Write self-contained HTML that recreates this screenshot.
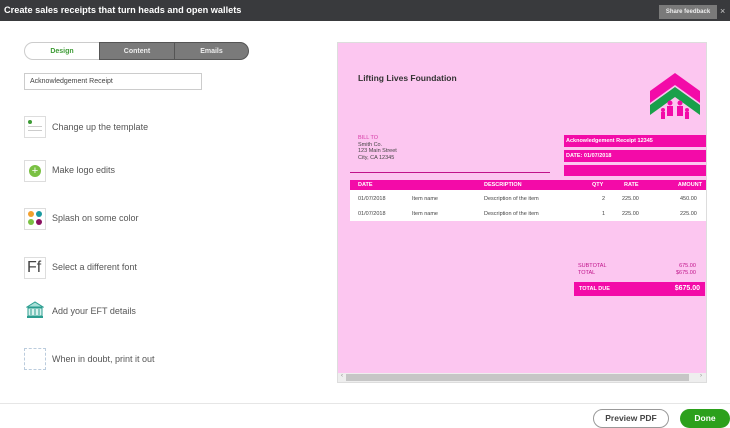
<!DOCTYPE html>
<html><head><style>
*{margin:0;padding:0;box-sizing:border-box}
body{width:730px;height:428px;background:#fff;font-family:"Liberation Sans",sans-serif;position:relative;overflow:hidden}
.a{position:absolute}
.hdr{left:0;top:0;width:730px;height:21px;background:#393a3d;color:#fff;font-size:9.2px;font-weight:bold;padding:5px 0 0 4px}
.sf{left:659px;top:5px;width:58px;height:14px;background:#7a7a7a;color:#eee;font-size:6px;font-weight:bold;text-align:center;line-height:14px}
.tab{top:42px;height:18px;font-size:7px;font-weight:bold;text-align:center;line-height:18px}
.it{left:52px;font-size:9px;color:#555}
.ic{left:24px;width:22px;height:22px;border:1px solid #ddd;background:#fff}
.pk{background:#f30ba8;color:#fff;font-size:5.5px;font-weight:bold}
.t{font-size:5.5px;color:#444}
</style></head><body>
<div class="a hdr">Create sales receipts that turn heads and open wallets</div>
<div class="a sf">Share feedback</div>
<div class="a" style="left:720px;top:6px;color:#ccc;font-size:9px">×</div>

<div class="a tab" style="left:24px;width:76px;border:1px solid #ccc;border-radius:9px 0 0 9px;color:#3d9b35;background:#fff">Design</div>
<div class="a tab" style="left:99px;width:76px;background:#7a7a7a;color:#eee;border:1px solid #555">Content</div>
<div class="a tab" style="left:174px;width:75px;background:#7a7a7a;color:#eee;border:1px solid #555;border-radius:0 9px 9px 0">Emails</div>
<div class="a" style="left:24px;top:73px;width:178px;height:17px;border:1px solid #ccc;font-size:7px;color:#444;padding:4px 5px">Acknowledgement Receipt</div>

<div class="a ic" style="top:116px"><div class="a" style="left:3px;top:3px;width:4px;height:4px;border-radius:50%;background:#3d9b35"></div><div class="a" style="left:3px;top:9px;width:14px;border-top:1px solid #ccc"></div><div class="a" style="left:3px;top:13px;width:14px;border-top:1px solid #ccc"></div></div>
<div class="a it" style="top:122px">Change up the template</div>
<div class="a ic" style="top:160px"><div class="a" style="left:4px;top:4px;width:12px;height:12px;border-radius:50%;background:#7ac143;color:#fff;font-size:11px;line-height:12px;text-align:center">+</div></div>
<div class="a it" style="top:165px">Make logo edits</div>
<div class="a ic" style="top:208px">
<div class="a" style="left:3px;top:2px;width:6px;height:6px;border-radius:50%;background:#f2a02e"></div>
<div class="a" style="left:11px;top:2px;width:6px;height:6px;border-radius:50%;background:#1a9aa0"></div>
<div class="a" style="left:3px;top:10px;width:6px;height:6px;border-radius:50%;background:#7ac143"></div>
<div class="a" style="left:11px;top:10px;width:6px;height:6px;border-radius:50%;background:#8a1060"></div></div>
<div class="a it" style="top:213px">Splash on some color</div>
<div class="a ic" style="top:257px;font-size:16px;color:#444;line-height:20px;padding-left:2px;font-weight:300">Ff</div>
<div class="a it" style="top:262px">Select a different font</div>
<svg class="a" style="left:26px;top:301px" width="18" height="18" viewBox="0 0 18 18"><path d="M1 6 L9 1 L17 6 Z" fill="#a8e0d8" stroke="#2a9d8f"/><rect x="2" y="7" width="14" height="8" fill="#d8f2ee" stroke="#2a9d8f"/><path d="M5 8v6M9 8v6M13 8v6" stroke="#2a9d8f"/><rect x="1" y="15" width="16" height="2" fill="#2a9d8f"/></svg>
<div class="a it" style="top:306px">Add your EFT details</div>
<div class="a ic" style="top:348px;border-style:dashed;border-color:#bcd"></div>
<div class="a it" style="top:354px">When in doubt, print it out</div>

<div class="a" style="left:337px;top:42px;width:370px;height:341px;background:#fcc6f0;border:1px solid #ddd"></div>
<div class="a" style="left:358px;top:73px;font-size:8.5px;font-weight:bold;color:#333">Lifting Lives Foundation</div>
<svg class="a" style="left:650px;top:73px" width="50" height="50" viewBox="0 0 50 50"><path d="M0 18 L25 0 L50 18 L50 30 L25 12 L0 30Z" fill="#f30ba8"/><path d="M0 32 L25 14 L50 32 L50 42 L25 24 L0 42Z" fill="#1aa04a"/><g fill="#f30ba8"><circle cx="20" cy="30" r="2.5"/><rect x="17" y="33" width="6" height="10"/><circle cx="30" cy="30" r="2.5"/><rect x="27" y="33" width="6" height="10"/><circle cx="13" cy="37" r="2"/><rect x="11" y="39" width="4" height="7"/><circle cx="37" cy="37" r="2"/><rect x="35" y="39" width="4" height="7"/></g></svg>
<div class="a" style="left:358px;top:135px;font-size:5.5px;line-height:6.5px;color:#444"><span style="color:#d63aa6">BILL TO</span><br>Smith Co.<br>123 Main Street<br>City, CA 12345</div>
<div class="a" style="left:350px;top:172px;width:200px;border-top:1px solid #c0138a"></div>
<div class="a pk" style="left:564px;top:135px;width:142px;height:12px;padding:3px 2px">Acknowledgement Receipt 12345</div>
<div class="a pk" style="left:564px;top:150px;width:142px;height:12px;padding:3px 2px">DATE: 01/07/2018</div>
<div class="a pk" style="left:564px;top:165px;width:142px;height:11px"></div>
<div class="a pk" style="left:350px;top:180px;width:356px;height:10px;line-height:10px">
<span class="a" style="left:8px">DATE</span><span class="a" style="left:134px">DESCRIPTION</span><span class="a" style="left:242px">QTY</span><span class="a" style="left:274px">RATE</span><span class="a" style="right:4px">AMOUNT</span></div>
<div class="a" style="left:350px;top:190px;width:356px;height:31px;background:#fff"></div>
<div class="a t" style="left:358px;top:196px">01/07/2018</div><div class="a t" style="left:412px;top:196px">Item name</div><div class="a t" style="left:484px;top:196px">Description of the item</div><div class="a t" style="left:602px;top:196px">2</div><div class="a t" style="left:622px;top:196px">225.00</div><div class="a t" style="left:680px;top:196px">450.00</div>
<div class="a t" style="left:358px;top:211px">01/07/2018</div><div class="a t" style="left:412px;top:211px">Item name</div><div class="a t" style="left:484px;top:211px">Description of the item</div><div class="a t" style="left:602px;top:211px">1</div><div class="a t" style="left:622px;top:211px">225.00</div><div class="a t" style="left:680px;top:211px">225.00</div>
<div class="a" style="left:578px;top:263px;font-size:5.5px;line-height:7px;color:#c0138a">SUBTOTAL<br>TOTAL</div>
<div class="a" style="left:676px;top:263px;font-size:5.5px;line-height:7px;color:#c0138a;text-align:right">675.00<br>$675.00</div>
<div class="a pk" style="left:574px;top:282px;width:131px;height:14px;line-height:14px;padding:0 5px">TOTAL DUE<span style="float:right;font-size:7px">$675.00</span></div>
<div class="a" style="left:338px;top:373px;width:368px;height:9px;background:#eee"></div>
<div class="a" style="left:346px;top:374px;width:343px;height:7px;background:#c6c6c6"></div>
<div class="a" style="left:341px;top:373px;font-size:6px;color:#888">‹</div>
<div class="a" style="left:700px;top:373px;font-size:6px;color:#888">›</div>

<div class="a" style="left:0;top:403px;width:730px;border-top:1px solid #e6e6e6"></div>
<div class="a" style="left:593px;top:409px;width:76px;height:19px;border:1.5px solid #999;border-radius:10px;font-size:8.5px;font-weight:bold;color:#444;text-align:center;line-height:16px">Preview PDF</div>
<div class="a" style="left:680px;top:409px;width:50px;height:19px;background:#2ca01c;border-radius:10px;font-size:8.5px;font-weight:bold;color:#fff;text-align:center;line-height:19px">Done</div>
</body></html>
